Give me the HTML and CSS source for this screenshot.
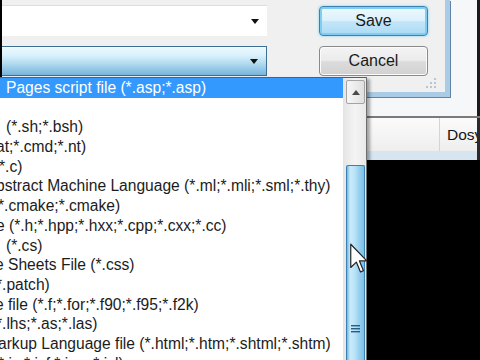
FILE: index.html
```html
<!DOCTYPE html>
<html>
<head>
<meta charset="utf-8">
<link rel="stylesheet" href="styles.css">
</head>
<body>
<div class="screen">
  <div class="behind">
    <div class="behind-top"></div>
    <div class="behind-header">
      <div class="col col-a"></div>
      <div class="col col-b">Dosya</div>
    </div>
    <div class="behind-strip"></div>
    <div class="console"></div>
  </div>

  <div class="dialog">
    <div class="fields">
      <div class="combo name">
        <svg class="arrow" width="8" height="5" viewBox="0 0 8 5"><polygon points="0,0 8,0 4,5" fill="#111"/></svg>
      </div>
      <div class="combo type">
        <svg class="arrow" width="8" height="5" viewBox="0 0 8 5"><polygon points="0,0 8,0 4,5" fill="#111"/></svg>
      </div>
    </div>
    <div class="buttons">
      <div class="btn save">Save</div>
      <div class="btn cancel">Cancel</div>
    </div>
    <svg class="grip" width="11" height="12" viewBox="0 0 11 12">
      <g fill="#b9c6d2">
        <rect x="8" y="1" width="2" height="2"/>
        <rect x="4" y="5" width="2" height="2"/><rect x="8" y="5" width="2" height="2"/>
        <rect x="0" y="9" width="2" height="2"/><rect x="4" y="9" width="2" height="2"/><rect x="8" y="9" width="2" height="2"/>
      </g>
    </svg>
  </div>

  <div class="dropdown">
    <div class="items">
      <div class="row sel">Pages script file (*.asp;*.asp)</div>
      <div class="row"></div>
      <div class="row">(*.sh;*.bsh)</div>
      <div class="row"><span class="cut4">at;*.cmd;*.nt)</span></div>
      <div class="row"><span class="cut1">*.c)</span></div>
      <div class="row"><span class="cut4">bstract Machine Language (*.ml;*.mli;*.sml;*.thy)</span></div>
      <div class="row"><span class="cut2">*.cmake;*.cmake)</span></div>
      <div class="row"><span class="cut4">e (*.h;*.hpp;*.hxx;*.cpp;*.cxx;*.cc)</span></div>
      <div class="row">(*.cs)</div>
      <div class="row"><span class="cut5">e Sheets File (*.css)</span></div>
      <div class="row"><span class="cut4">*.patch)</span></div>
      <div class="row"><span class="cut5">e file (*.f;*.for;*.f90;*.f95;*.f2k)</span></div>
      <div class="row"><span class="cut4">*.lhs;*.as;*.las)</span></div>
      <div class="row"><span class="cut2">arkup Language file (*.html;*.htm;*.shtml;*.shtm)</span></div>
      <div class="row"><span class="cut2">*.js;*.jsf;*.jsm;*.jsl)</span></div>
    </div>
    <div class="scrollbar">
      <div class="sb-up">
        <svg width="8" height="5" viewBox="0 0 8 5"><polygon points="0,5 8,5 4,0" fill="#4a4a4a"/></svg>
      </div>
      <div class="sb-track"></div>
      <div class="sb-thumb">
        <svg width="9" height="9" viewBox="0 0 9 9"><g fill="#2a5d83"><rect x="0" y="1" width="9" height="1.4"/><rect x="0" y="4" width="9" height="1.4"/><rect x="0" y="7" width="9" height="1.4"/></g></svg>
      </div>
    </div>
  </div>

  <svg class="cursor" width="18" height="31" viewBox="0 0 12 20">
    <polygon points="0.5,0.5 0.5,16 4.2,12.4 7,19 9,18.1 6.3,11.6 11.2,11.6" fill="#fff" stroke="#222" stroke-width="0.8" stroke-linejoin="round"/>
  </svg>
</div>
</body>
</html>
```

FILE: styles.css
```css
* { box-sizing: border-box; }

html, body {
  margin: 0;
  padding: 0;
}

body {
  width: 480px;
  height: 360px;
  overflow: hidden;
  font-family: "Liberation Sans", Arial, sans-serif;
  background: #000;
}

.screen {
  position: relative;
  width: 480px;
  height: 360px;
  overflow: hidden;
}

/* window behind the dialog */
.behind {
  display: flex;
  flex-direction: column;
  height: 360px;
}

.behind-top {
  height: 118px;
  background: #f6f7f8;
  border-bottom: 2px solid #7a7a7a;
  box-shadow: inset -3px 0 0 #1a1a1a;
}

.behind-header {
  display: flex;
  height: 33px;
  background: linear-gradient(#fbfbfb, #eeeeee);
  box-shadow: inset -3px 0 0 #2a2a2a;
}

.col-a {
  width: 440px;
  border-right: 1px solid #d4d4d4;
}

.col-b {
  flex: 1;
  margin-right: 3px;
  padding-left: 7px;
  font-size: 15.5px;
  line-height: 33px;
  color: #151515;
  white-space: nowrap;
  overflow: hidden;
}

.behind-strip {
  height: 9px;
  background: #d6e5f0;
  box-shadow: inset -3px 0 0 #2a2a2a;
}

.console {
  flex: 1;
  background: #000;
}

/* save dialog */
.dialog {
  position: absolute;
  left: 0;
  top: 0;
  width: 450px;
  height: 97px;
  display: flex;
  align-items: flex-start;
  padding-top: 5px;
  background: #f0f0f0;
  border-left: 2px solid #000;
  border-right: 5px solid #a9cbe6;
  border-bottom: 5px solid #a9cbe6;
  box-shadow: 1px 1px 0 #5f84a6;
}

.fields {
  width: 265px;
  display: flex;
  flex-direction: column;
  gap: 10px;
}

.combo {
  display: flex;
  align-items: center;
  justify-content: flex-end;
  padding-right: 8px;
}

.combo.name {
  height: 31px;
  background: #fff;
  border-top: 1px solid #dedede;
}

.combo.type {
  height: 30px;
  border: 1px solid #3d6f95;
  border-left: none;
  background: linear-gradient(#eef9fe 0%, #d9f1fb 30%, #b8def2 55%, #93c7e6 80%, #79b4db 100%);
  box-shadow: inset 0 1px 0 #f7fcff;
}

.arrow { display: block; }

.buttons {
  margin-left: 52px;
  width: 109px;
  padding-top: 1px;
  display: flex;
  flex-direction: column;
  gap: 10px;
}

.btn {
  height: 30px;
  display: flex;
  align-items: center;
  justify-content: center;
  font-size: 16px;
  color: #1a1a1a;
  border-radius: 4px;
}

.btn.save {
  border: 1px solid #3c7fb1;
  background: linear-gradient(#eef8fd 0%, #dcf1fc 48%, #c3e6f9 52%, #abdaf4 100%);
  box-shadow: inset 0 0 0 2px #7fcdf0, 0 0 3px #7fd0f3;
}

.btn.cancel {
  border: 1px solid #8a8a8a;
  background: linear-gradient(#f4f4f4 0%, #ebebeb 48%, #dcdcdc 52%, #d1d1d1 100%);
  box-shadow: inset 0 0 0 1px #fbfbfb;
}

.grip {
  position: absolute;
  right: 8px;
  bottom: 3px;
}

/* open drop-down list */
.dropdown {
  position: absolute;
  left: 0;
  top: 77px;
  width: 367px;
  height: 290px;
  display: flex;
  background: #fff;
  border-top: 1px solid #5e5e5e;
  border-right: 1px solid #6e6e6e;
  box-shadow: 3px 2px 3px rgba(0, 0, 0, 0.35);
}

.items {
  width: 343px;
  overflow: hidden;
  font-size: 15.6px;
  color: #1c1c1c;
}

.row {
  height: 19.7px;
  line-height: 19.7px;
  padding-left: 6px;
  white-space: nowrap;
}

.row.sel {
  background: #3399ff;
  color: #fff;
}

.cut1 { margin-left: -7px; }
.cut2 { margin-left: -8px; }
.cut4 { margin-left: -10px; }
.cut5 { margin-left: -11px; }

.scrollbar {
  flex: 1;
  display: flex;
  flex-direction: column;
  background: linear-gradient(90deg, #e6e6e6, #f4f4f4 50%, #e9e9e9);
  border-left: 1px solid #e4e4e4;
}

.sb-up {
  height: 24px;
  margin: 2px 1px 0 2px;
  display: flex;
  align-items: center;
  justify-content: center;
  border: 1px solid #a4a4a4;
  border-radius: 2px;
  background: linear-gradient(90deg, #f6f6f6, #ececec 50%, #dfdfdf);
}

.sb-track {
  height: 61px;
}

.sb-thumb {
  flex: 1;
  margin: 0 1px 0 2px;
  padding-top: 158px;
  display: flex;
  justify-content: center;
  align-items: flex-start;
  border: 1px solid #3b80b3;
  border-bottom: none;
  border-radius: 2px 2px 0 0;
  background: linear-gradient(90deg, #6fb6e2 0%, #c9ebfa 18%, #b9e3f7 45%, #99d1ef 70%, #7cc0e7 100%);
}

.cursor {
  position: absolute;
  left: 350px;
  top: 243px;
}
```
